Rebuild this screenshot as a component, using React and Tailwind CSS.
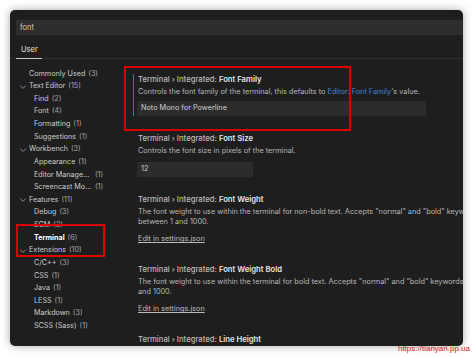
import React from "react";

const F = { fontFamily: "Inter, 'Noto Sans', sans-serif" };

function Chevron() {
  return (
    <svg width="8" height="8" viewBox="0 0 8 8" className="mr-[2px] shrink-0">
      <path d="M1.2 2.6 L4 5.4 L6.8 2.6" fill="none" stroke="#9a9a9a" strokeWidth="0.9" />
    </svg>
  );
}

function Item({ label, count, level = 0, chevron = false, bold = false, trunc = false }) {
  return (
    <div className={"flex items-center h-[12.63px] whitespace-nowrap " + (level === 0 ? "pl-[9px]" : "pl-[24px]")}>
      {level === 0 && (chevron ? <Chevron /> : <span className="w-[10px] shrink-0" />)}
      {trunc ? (
        <span className="inline-block w-[58px] text-[#cccccc]">{label}</span>
      ) : (
        <span className={bold ? "text-white font-bold" : "text-[#cccccc]"}>{label}</span>
      )}
      <span className="text-[#a8a8a8] ml-[3px]">{count}</span>
    </div>
  );
}

function Title({ bold }) {
  return (
    <div className="h-[12px] leading-[12px] whitespace-nowrap text-[7.7px]">
      <span className="text-[#bdbdbd] font-medium">Terminal › Integrated: </span>
      <span className="text-[#e6e6e6] font-semibold">{bold}</span>
    </div>
  );
}

function Desc({ lines }) {
  return (
    <div className="mt-[1px] text-[7.3px] leading-[10px] text-[#b6b6b6]">
      {lines.map((l, i) => (
        <div key={i} className="whitespace-nowrap">{l}</div>
      ))}
    </div>
  );
}

function Edit() {
  return (
    <div className="mt-[6px] pb-[2px] text-[7.3px] leading-[12px] text-[#bdbdbd] underline whitespace-nowrap">
      Edit in settings.json
    </div>
  );
}

export default function App() {
  return (
    <div className="w-[474px] h-[357px] bg-white relative overflow-hidden pt-[10px] pl-[10px]" style={F}>
      <div className="w-[453px] h-[336px] rounded-[5px] bg-[#1e1e1e] shadow-[0_0_8px_rgba(0,0,0,0.35)] relative overflow-hidden flex flex-col">
        <div className="mt-[10px] ml-[6px] h-[15px] bg-[#2e2e2e] flex items-center pl-[4px] text-[7.5px] text-[#cfcfcf]">
          font
        </div>
        <div className="border-b border-[#303030] flex">
          <div className="ml-[6px] w-[26px] pl-[5px] pt-[9px] pb-[2px] h-[24px] leading-[12px] text-[7.5px] text-[#e2e2e2] border-b border-[#c8c8c8] -mb-px">
            User
          </div>
        </div>
        <div className="flex flex-1 min-h-0">
          <div className="w-[114px] shrink-0 pt-[8.7px] text-[7.2px]">
            <Item label="Commonly Used" count="(3)" />
            <Item label="Text Editor" count="(15)" chevron />
            <Item label="Find" count="(2)" level={1} />
            <Item label="Font" count="(4)" level={1} />
            <Item label="Formatting" count="(1)" level={1} />
            <Item label="Suggestions" count="(1)" level={1} />
            <Item label="Workbench" count="(3)" chevron />
            <Item label="Appearance" count="(1)" level={1} />
            <Item label="Editor Manage..." count="(1)" level={1} trunc />
            <Item label="Screencast Mo..." count="(1)" level={1} trunc />
            <Item label="Features" count="(11)" chevron />
            <Item label="Debug" count="(3)" level={1} />
            <Item label="SCM" count="(2)" level={1} />
            <Item label="Terminal" count="(6)" level={1} bold />
            <Item label="Extensions" count="(10)" chevron />
            <Item label="C/C++" count="(3)" level={1} />
            <Item label="CSS" count="(1)" level={1} />
            <Item label="Java" count="(1)" level={1} />
            <Item label="LESS" count="(1)" level={1} />
            <Item label="Markdown" count="(3)" level={1} />
            <Item label="SCSS (Sass)" count="(1)" level={1} />
          </div>
          <div className="flex-1 pl-[9px] pt-[14.7px] flex flex-col gap-[17px]">
            <div className="border-l border-[#1b8a95] pl-[4px]">
              <Title bold="Font Family" />
              <div className="mt-[1px] text-[7.3px] leading-[10px] text-[#b6b6b6] whitespace-nowrap">
                Controls the font family of the terminal, this defaults to{" "}
                <span className="text-[#3b82d6]">Editor: Font Family</span>'s value.
              </div>
              <div className="mt-[4.5px] -ml-px w-[289px] h-[15px] bg-[#2c2c2c] flex items-center pl-[4px] text-[7.3px] text-[#d0d0d0]">
                Noto Mono for Powerline
              </div>
            </div>
            <div className="border-l border-transparent pl-[4px]">
              <Title bold="Font Size" />
              <Desc lines={["Controls the font size in pixels of the terminal."]} />
              <div className="mt-[6px] -ml-px w-[116px] h-[15px] bg-[#2c2c2c] flex items-center pl-[4px] text-[7.3px] text-[#d0d0d0]">
                12
              </div>
            </div>
            <div className="border-l border-transparent pl-[4px]">
              <Title bold="Font Weight" />
              <Desc
                lines={[
                  'The font weight to use within the terminal for non-bold text. Accepts "normal" and "bold" keywords',
                  "between 1 and 1000.",
                ]}
              />
              <Edit />
            </div>
            <div className="border-l border-transparent pl-[4px]">
              <Title bold="Font Weight Bold" />
              <Desc
                lines={[
                  'The font weight to use within the terminal for bold text. Accepts "normal" and "bold" keywords',
                  "and 1000.",
                ]}
              />
              <Edit />
            </div>
            <div className="border-l border-transparent pl-[4px]">
              <Title bold="Line Height" />
            </div>
          </div>
        </div>
        <div className="absolute left-[114px] top-[56px] w-[227px] h-[65px] border-2 border-[#d90000]" />
        <div className="absolute left-[6px] top-[214px] w-[89px] h-[33px] border-2 border-[#d90000]" />
      </div>
      <div
        className="absolute right-[4px] top-[343px] text-[8px] leading-[11px] text-[#d41a1a]"
        style={{ fontFamily: "'Liberation Sans', Arial, sans-serif" }}
      >
        https://tianyan.pp.ua
      </div>
    </div>
  );
}
